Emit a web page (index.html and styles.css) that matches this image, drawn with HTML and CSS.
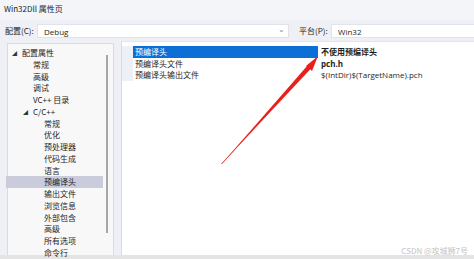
FILE: index.html
```html
<!DOCTYPE html>
<html>
<head>
	<title>Win32Dll 属性页</title>
	<meta charset="UTF-8">
	<link rel="stylesheet" href="styles.css">
</head>
<body>
	<div id="dialog">
		<div class="titlebar">Win32Dll 属性页</div>
		<div class="config_row">
			<span class="label">配置(C):</span>
			<div class="combo combo_config"><span>Debug</span><span class="chevron">&#8964;</span></div>
			<span class="label label_platform">平台(P):</span>
			<div class="combo combo_platform"><span>Win32</span></div>
		</div>
		<div class="main">
			<div class="tree">
				<div class="tree_item lvl0"><span class="arrow_icon">&#9698;</span>配置属性</div>
				<div class="tree_item lvl1">常规</div>
				<div class="tree_item lvl1">高级</div>
				<div class="tree_item lvl1">调试</div>
				<div class="tree_item lvl1">VC++ 目录</div>
				<div class="tree_item lvl1 open"><span class="arrow_icon">&#9698;</span>C/C++</div>
				<div class="tree_item lvl2">常规</div>
				<div class="tree_item lvl2">优化</div>
				<div class="tree_item lvl2">预处理器</div>
				<div class="tree_item lvl2">代码生成</div>
				<div class="tree_item lvl2">语言</div>
				<div class="tree_item lvl2 selected">预编译头</div>
				<div class="tree_item lvl2">输出文件</div>
				<div class="tree_item lvl2">浏览信息</div>
				<div class="tree_item lvl2">外部包含</div>
				<div class="tree_item lvl2">高级</div>
				<div class="tree_item lvl2">所有选项</div>
				<div class="tree_item lvl2">命令行</div>
				<div class="scrollbar"></div>
			</div>
			<div class="grid">
				<div class="grid_row">
					<div class="stripe"></div>
					<div class="name active">预编译头</div>
					<div class="value bold">不使用预编译头</div>
				</div>
				<div class="grid_row">
					<div class="stripe"></div>
					<div class="name">预编译头文件</div>
					<div class="value bold">pch.h</div>
				</div>
				<div class="grid_row">
					<div class="stripe"></div>
					<div class="name">预编译头输出文件</div>
					<div class="value">$(IntDir)$(TargetName).pch</div>
				</div>
			</div>
		</div>
		<div class="footer"></div>
		<svg class="annotation" width="474" height="259" viewBox="0 0 474 259">
			<polygon points="221,164 309,69 306,66 318,56 312,71 309,68 222,164" fill="#e8201c" />
			<polygon points="221.5,164 311,68.5 307.5,65.5" fill="#e8201c" />
		</svg>
		<div class="watermark">CSDN @攻城狮7号</div>
	</div>
</body>
</html>
```

FILE: styles.css
```css
body {
	margin: 0;
	background-color: #eef0f5;
	font-family: "Noto Sans CJK SC", "Noto Sans", sans-serif;
	font-size: 8px;
	color: #1e1e1e;
}

#dialog {
	position: relative;
	width: 474px;
	height: 259px;
	overflow: hidden;
	display: flex;
	flex-direction: column;
}

.titlebar {
	height: 20px;
	line-height: 18px;
	padding-left: 4px;
	background-color: #f3f5f9;
	font-size: 8px;
}

.config_row {
	display: flex;
	align-items: center;
	height: 14px;
	margin-top: 4px;
	padding-left: 5px;
}

.label {
	width: 32px;
	line-height: 14px;
}

.label_platform {
	width: 32px;
	margin-left: 10px;
}

.combo {
	height: 14px;
	box-sizing: border-box;
	background-color: #ffffff;
	border: 1px solid #e1e3e8;
	display: flex;
	align-items: center;
	justify-content: space-between;
	padding: 0 3px 0 6px;
	font-family: "Open Sans", "Noto Sans", sans-serif;
	font-size: 8px;
}

.combo_config {
	width: 252px;
}

.combo_platform {
	flex: 1;
	border-right: none;
}

.chevron {
	color: #8a8a8a;
	font-size: 8px;
	line-height: 6px;
	margin-top: -4px;
}

.main {
	display: flex;
	height: 212px;
	margin-top: 5px;
	padding-left: 7px;
}

.tree {
	position: relative;
	width: 107px;
	box-sizing: border-box;
	background-color: #f8f8f9;
	border: 1px solid #d9dbe0;
	border-bottom: none;
	padding-top: 3px;
	padding-right: 10px;
}

.tree_item {
	height: 11.75px;
	line-height: 11.75px;
	white-space: nowrap;
}

.lvl0 {
	padding-left: 4px;
}

.lvl1 {
	padding-left: 25px;
}

.lvl1.open {
	padding-left: 15px;
}

.lvl2 {
	padding-left: 36px;
}

.arrow_icon {
	display: inline-block;
	width: 10px;
	font-size: 5px;
	color: #333333;
	vertical-align: top;
}

.selected {
	background-color: #cacbdb;
	margin-left: -2px;
	padding-left: 38px;
}

.scrollbar {
	position: absolute;
	right: 5px;
	top: 11px;
	width: 2px;
	height: 178px;
	background-color: #a6a6a6;
}

.grid {
	flex: 1;
	margin-left: 7px;
	margin-top: -2px;
	background-color: #ffffff;
	border-left: 1px solid #d9dbe0;
	border-top: 1px solid #e3e5ea;
	padding-top: 4px;
}

.grid_row {
	display: flex;
	height: 11.5px;
	line-height: 11.5px;
}

.stripe {
	width: 11px;
	background-color: #eef0f8;
}

.name {
	width: 183px;
	padding-left: 2px;
	white-space: nowrap;
}

.name.active {
	background-color: #0c6fd6;
	color: #ffffff;
}

.value {
	padding-left: 3px;
	white-space: nowrap;
	font-family: "Open Sans", "Noto Sans CJK SC", sans-serif;
}

.bold {
	font-weight: bold;
}

.footer {
	flex: 1;
	background-color: #e4e4e4;
}

.annotation {
	position: absolute;
	left: 0;
	top: 0;
	pointer-events: none;
}

.watermark {
	position: absolute;
	right: 6px;
	bottom: 3px;
	color: #c4c4c4;
	font-size: 8px;
}
```
